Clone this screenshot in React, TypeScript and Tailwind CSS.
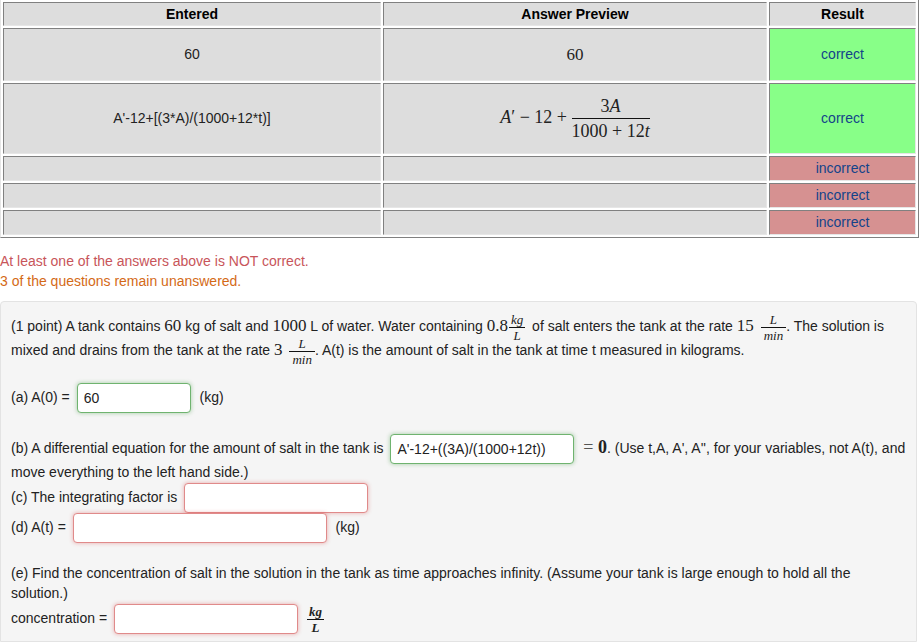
import type { ReactNode } from "react";

const SANS = "font-['Liberation_Sans',Arial,sans-serif]";
const SERIF = "font-['Liberation_Serif','Times_New_Roman',serif]";

function Frac({
  num,
  den,
  small = true,
  pad = "",
}: {
  num: ReactNode;
  den: ReactNode;
  small?: boolean;
  pad?: string;
}) {
  return (
    <span
      className={`inline-flex flex-col items-center align-middle leading-none ${SERIF} ${
        small ? "text-[13px]" : "text-[18px]"
      } ${pad}`}
    >
      <span className={small ? "px-[2px] pb-[1px]" : "px-[3px] pb-[3px]"}>{num}</span>
      <span className={`w-full border-t border-[#111] text-center ${small ? "pt-[1px]" : "pt-[3px]"}`}>
        {den}
      </span>
    </span>
  );
}

function M({ children }: { children: ReactNode }) {
  return <span className={`${SERIF} text-[17px]`}>{children}</span>;
}

const cell =
  "border-t border-l border-b border-r border-t-[#808080] border-l-[#808080] border-b-[#e6e6e6] border-r-[#e6e6e6] text-center align-middle";

function ResultCell({ ok }: { ok: boolean }) {
  return (
    <td className={`${cell} ${ok ? "bg-[#88ff88]" : "bg-[#d69191]"} text-[#13438a]`}>
      {ok ? "correct" : "incorrect"}
    </td>
  );
}

function Input({ value = "", w, ok }: { value?: string; w: string; ok: boolean }) {
  return (
    <input
      readOnly
      value={value}
      className={`${w} ml-[3px] mr-[5px] inline-block h-[30px] rounded-[4px] border bg-white px-[6px] align-middle text-[14px] text-[#222] outline-none ${SANS} ${
        ok
          ? "border-[#6fb36f] shadow-[0_0_4px_rgba(60,150,60,0.45)]"
          : "border-[#e08a8a] shadow-[0_0_4px_rgba(220,80,80,0.45)]"
      }`}
    />
  );
}

// L over min, slightly wider bar like the MathJax render
function PerMin() {
  return (
    <span className="ml-[3px] inline-block align-middle">
      <Frac num={<i>L</i>} den={<i className="px-[3px]">min</i>} />
    </span>
  );
}

export default function App() {
  return (
    <div className={`w-[917px] bg-white text-[14px] text-[#222] ${SANS}`}>
      <table className="w-[917px] table-fixed border-separate border-spacing-[2px] border border-t-0 border-l-[#e6e6e6] border-b-[#808080] border-r-[#808080] bg-white">
        <colgroup>
          <col className="w-[378px]" />
          <col className="w-[384px]" />
          <col className="w-[147px]" />
        </colgroup>
        <tbody>
          <tr className="h-[24px]">
            <th className={`${cell} bg-[#dddddd] font-bold text-black`}>Entered</th>
            <th className={`${cell} bg-[#dddddd] font-bold text-black`}>Answer Preview</th>
            <th className={`${cell} bg-[#dddddd] font-bold text-black`}>Result</th>
          </tr>
          <tr className="h-[53px]">
            <td className={`${cell} bg-[#dddddd]`}>60</td>
            <td className={`${cell} bg-[#dddddd]`}>
              <M>60</M>
            </td>
            <ResultCell ok />
          </tr>
          <tr className="h-[71px]">
            <td className={`${cell} bg-[#dddddd]`}>A'-12+[(3*A)/(1000+12*t)]</td>
            <td className={`${cell} bg-[#dddddd]`}>
              <span className={`${SERIF} text-[18px]`}>
                <i>A</i>′ − 12 +{" "}
                <Frac
                  small={false}
                  num={
                    <>
                      3<i>A</i>
                    </>
                  }
                  den={
                    <>
                      1000 + 12<i>t</i>
                    </>
                  }
                />
              </span>
            </td>
            <ResultCell ok />
          </tr>
          {[0, 1, 2].map((i) => (
            <tr key={i} className="h-[25px]">
              <td className={`${cell} bg-[#dddddd]`} />
              <td className={`${cell} bg-[#dddddd]`} />
              <ResultCell ok={false} />
            </tr>
          ))}
        </tbody>
      </table>

      <div className="mt-[13px] leading-[20px]">
        <div className="text-[#c8555a]">At least one of the answers above is NOT correct.</div>
        <div className="text-[#d46a16]">3 of the questions remain unanswered.</div>
      </div>

      <div className="mt-[10px] rounded-t-[4px] border border-[#e3e3e3] bg-[#f5f5f5] px-[10px] pt-[11px] pb-[8px]">
        <div className="h-[24px] leading-[24px] whitespace-nowrap">
          (1 point) A tank contains <M>60</M> kg of salt and <M>1000</M> L of water. Water containing{" "}
          <M>0.8</M>
          <Frac num={<i>kg</i>} den={<i>L</i>} pad="ml-[1px] mr-[3px]" /> of salt enters the tank at the rate{" "}
          <M>15</M> <PerMin />. The solution is
        </div>
        <div className="h-[24px] leading-[24px] whitespace-nowrap">
          mixed and drains from the tank at the rate <M>3</M> <PerMin />. A(t) is the amount of salt in the tank
          at time t measured in kilograms.
        </div>

        <div className="mt-[21px] h-[30px] leading-[30px] whitespace-nowrap">
          (a) A(0) = <Input value="60" w="w-[114px]" ok /> (kg)
        </div>

        <div className="mt-[20px] h-[30px] leading-[30px] whitespace-nowrap">
          (b) A differential equation for the amount of salt in the tank is{" "}
          <Input value="A'-12+((3A)/(1000+12t))" w="w-[184px]" ok />{" "}
          <span className={`${SERIF} text-[18px]`}>
            <span className="text-[#555]">=</span> <b>0</b>
          </span>
          . (Use t,A, A', A'', for your variables, not A(t), and
        </div>
        <div className="h-[20px] leading-[20px]">move everything to the left hand side.)</div>
        <div className="h-[30px] leading-[30px] whitespace-nowrap">
          (c) The integrating factor is <Input w="w-[184px]" ok={false} />
        </div>
        <div className="h-[30px] leading-[30px] whitespace-nowrap">
          (d) A(t) = <Input w="w-[254px]" ok={false} /> (kg)
        </div>

        <div className="mt-[21px] h-[20px] leading-[20px] whitespace-nowrap">
          (e) Find the concentration of salt in the solution in the tank as time approaches infinity. (Assume your
          tank is large enough to hold all the
        </div>
        <div className="h-[20px] leading-[20px]">solution.)</div>
        <div className="h-[30px] leading-[30px] whitespace-nowrap">
          concentration = <Input w="w-[184px]" ok={false} />{" "}
          <Frac num={<i className="font-bold">kg</i>} den={<i className="font-bold">L</i>} />
        </div>
      </div>
    </div>
  );
}
